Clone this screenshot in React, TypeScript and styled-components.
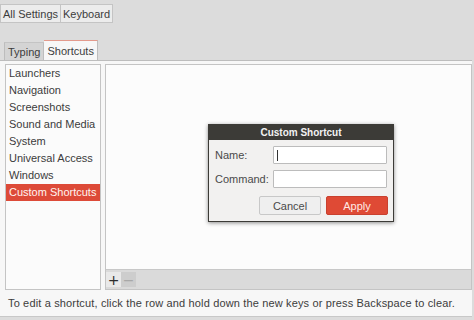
import styled, { createGlobalStyle } from "styled-components";

// Page defaults: grey window background, small UI font
const GlobalStyle = createGlobalStyle`
  html, body {
    margin: 0;
    padding: 0;
    background: #dcdcdc;
    overflow: hidden;
  }
  body {
    font-family: "Liberation Sans", "DejaVu Sans", sans-serif;
    font-size: 11px;
    color: #3c3c3c;
  }
`;

const Page = styled.div`
  width: 474px;
  height: 320px;
  display: flex;
  flex-direction: column;
`;

// Breadcrumb buttons at the top
const TopBar = styled.div`
  display: flex;
  padding-top: 4px;
  height: 36px;
  box-sizing: border-box;
`;

const NavButton = styled.div`
  height: 19px;
  padding: 0 2px;
  display: flex;
  align-items: center;
  background: #ececec;
  border: 1px solid #c4c4c4;
  box-sizing: border-box;
  & + & {
    border-left: none;
  }
`;

// Notebook tabs
const Tabs = styled.div`
  display: flex;
  align-items: flex-end;
  padding-left: 4px;
  height: 24px;
`;

const Tab = styled.div<{ $active?: boolean }>`
  height: ${(p) => (p.$active ? "20px" : "18px")};
  padding: 0 3px;
  display: flex;
  align-items: center;
  box-sizing: border-box;
  background: ${(p) => (p.$active ? "#f7f7f7" : "#d4d4d4")};
  border: 1px solid #bdbdbd;
  border-bottom: none;
  border-top: ${(p) => (p.$active ? "1px solid #e39a8c" : "1px solid #c4c4c4")};
  & + & {
    border-left: none;
  }
`;

const Panel = styled.div`
  flex: 1;
  display: flex;
  flex-direction: column;
  background: #f7f7f7;
  border-top: 1px solid #bdbdbd;
  border-bottom: 1px solid #c8c8c8;
  margin-bottom: 3px;
  margin-right: 2px;
`;

const Columns = styled.div`
  display: flex;
  gap: 4px;
  padding: 3px 0 0 5px;
  height: 229px;
  box-sizing: border-box;
`;

// Category list on the left
const CategoryList = styled.div`
  width: 96px;
  border: 1px solid #c4c4c4;
  background: #fbfbfb;
  box-sizing: border-box;
  display: flex;
  flex-direction: column;
`;

const Category = styled.div<{ $selected?: boolean }>`
  height: 17px;
  line-height: 17px;
  padding-left: 3px;
  white-space: nowrap;
  background: ${(p) => (p.$selected ? "#dd4a38" : "transparent")};
  color: ${(p) => (p.$selected ? "#fff4f0" : "#3c3c3c")};
`;

// Shortcut pane with toolbar
const ShortcutPane = styled.div`
  flex: 1;
  display: flex;
  flex-direction: column;
  border: 1px solid #c4c4c4;
  box-sizing: border-box;
  position: relative;
`;

const ShortcutArea = styled.div`
  flex: 1;
  background: #fcfcfc;
`;

const Toolbar = styled.div`
  height: 19px;
  background: #dadada;
  border-top: 1px solid #c8c8c8;
  display: flex;
  align-items: center;
`;

const ToolButton = styled.div<{ $disabled?: boolean }>`
  width: 15px;
  height: 15px;
  display: flex;
  align-items: center;
  justify-content: center;
  background: ${(p) => (p.$disabled ? "#cdcdcd" : "#e9e9e9")};
  color: ${(p) => (p.$disabled ? "#a8a8a8" : "#2c2c2c")};
  font-size: 14px;
  font-family: "DejaVu Sans", sans-serif;
  line-height: 1;
`;

const Hint = styled.div`
  flex: 1;
  display: flex;
  align-items: center;
  padding-left: 8px;
  white-space: nowrap;
  letter-spacing: 0.15px;
`;

// Modal dialog over the shortcut pane
const Dialog = styled.div`
  position: absolute;
  left: 102px;
  top: 59px;
  width: 186px;
  height: 98px;
  box-sizing: border-box;
  border: 1px solid #3c3b37;
  background: #f2f1f0;
  box-shadow: 0 1px 4px rgba(0, 0, 0, 0.45);
  display: flex;
  flex-direction: column;
`;

const DialogTitle = styled.div`
  height: 15px;
  background: #3c3b37;
  color: #f2f2f2;
  font-weight: bold;
  font-size: 10px;
  display: flex;
  align-items: center;
  justify-content: center;
`;

const Form = styled.div`
  display: grid;
  grid-template-columns: 1fr 114px;
  row-gap: 6px;
  align-items: center;
  padding: 6px 6px 0 6px;
`;

const Label = styled.div`
  color: #4a4a4a;
`;

const Input = styled.div<{ $focused?: boolean }>`
  height: 18px;
  box-sizing: border-box;
  background: #ffffff;
  border: 1px solid #bcbcbc;
  border-radius: 1px;
  padding-left: 3px;
  display: flex;
  align-items: center;
  &::before {
    content: "";
    display: ${(p) => (p.$focused ? "block" : "none")};
    width: 1px;
    height: 11px;
    background: #333;
  }
`;

const Actions = styled.div`
  display: flex;
  justify-content: flex-end;
  gap: 5px;
  padding: 8px 5px 0 0;
`;

const DialogButton = styled.div<{ $primary?: boolean }>`
  width: 62px;
  height: 19px;
  box-sizing: border-box;
  display: flex;
  align-items: center;
  justify-content: center;
  border-radius: 2px;
  border: 1px solid ${(p) => (p.$primary ? "#c9412f" : "#c8c8c8")};
  background: ${(p) => (p.$primary ? "#df4a35" : "#efefef")};
  color: ${(p) => (p.$primary ? "#ffe9e4" : "#4a4a4a")};
`;

const categories = [
  "Launchers",
  "Navigation",
  "Screenshots",
  "Sound and Media",
  "System",
  "Universal Access",
  "Windows",
  "Custom Shortcuts",
];

export default function App() {
  return (
    <>
      <GlobalStyle />
      <Page>
        <TopBar>
          <NavButton>All Settings</NavButton>
          <NavButton>Keyboard</NavButton>
        </TopBar>
        <Tabs>
          <Tab>Typing</Tab>
          <Tab $active>Shortcuts</Tab>
        </Tabs>
        <Panel>
          <Columns>
            <CategoryList>
              {categories.map((c) => (
                <Category key={c} $selected={c === "Custom Shortcuts"}>
                  {c}
                </Category>
              ))}
            </CategoryList>
            <ShortcutPane>
              <ShortcutArea />
              <Toolbar>
                <ToolButton>+</ToolButton>
                <ToolButton $disabled>−</ToolButton>
              </Toolbar>
              <Dialog>
                <DialogTitle>Custom Shortcut</DialogTitle>
                <Form>
                  <Label>Name:</Label>
                  <Input $focused />
                  <Label>Command:</Label>
                  <Input />
                </Form>
                <Actions>
                  <DialogButton>Cancel</DialogButton>
                  <DialogButton $primary>Apply</DialogButton>
                </Actions>
              </Dialog>
            </ShortcutPane>
          </Columns>
          <Hint>
            To edit a shortcut, click the row and hold down the new keys or press Backspace to clear.
          </Hint>
        </Panel>
      </Page>
    </>
  );
}
